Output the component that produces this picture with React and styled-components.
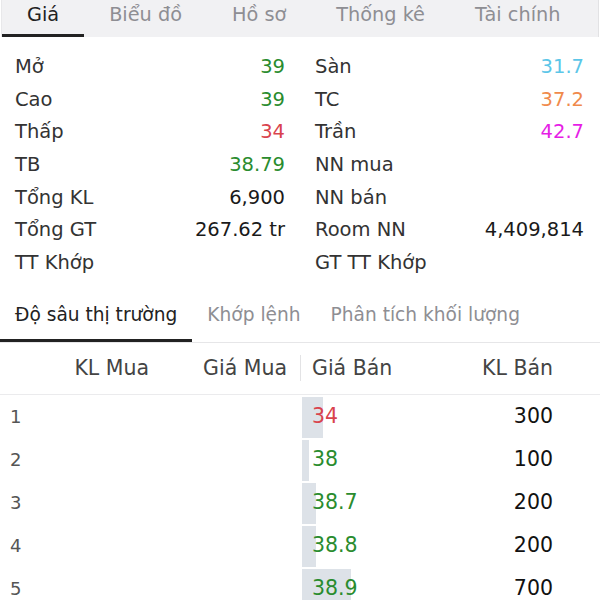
import React from "react";
import styled, { createGlobalStyle } from "styled-components";

const Global = createGlobalStyle`
  html, body { margin: 0; padding: 0; background: #fff; }
  body { font-family: "DejaVu Sans", "Noto Sans", sans-serif; -webkit-font-smoothing: antialiased; }
  * { box-sizing: border-box; }
`;

const Page = styled.div`
  width: 600px;
  height: 600px;
  overflow: hidden;
  background: #fff;
`;

const TopTabs = styled.div`
  display: flex;
  height: 37px;
  background: #f1f1f3;
  border-right: 1px solid #e2e2e4;
  border-left: 1px solid #e8e8ea;
  width: 598px;
  margin-left: 1px;
`;

const TopTab = styled.div`
  flex-shrink: 0;
  padding: 0 25px;
  height: 37px;
  line-height: 29px;
  font-size: 19.3px;
  color: ${(p) => (p.$active ? "#222" : "#8e8e93")};
  border-bottom: 3px solid ${(p) => (p.$active ? "#222" : "transparent")};
  white-space: nowrap;
`;

const Stats = styled.div`
  display: grid;
  grid-template-columns: 300px 300px;
  padding-top: 14px;
`;

const StatCol = styled.div`
  display: flex;
  flex-direction: column;
  padding: ${(p) => (p.$right ? "0 16px 0 15px" : "0 15px 0 15px")};
`;

const StatRow = styled.div`
  display: flex;
  justify-content: space-between;
  height: 32.7px;
  line-height: 32.7px;
  font-size: 19.5px;
`;

const StatLabel = styled.span`
  color: #333;
`;

const StatValue = styled.span`
  color: ${(p) => p.$color || "#1a1a1a"};
`;

const SubTabs = styled.div`
  display: flex;
  margin-top: 11px;
  height: 52px;
  border-bottom: 1px solid #e6e6e8;
`;

const SubTab = styled.div`
  padding: 0 15px;
  white-space: nowrap;
  font-size: 18.6px;
  line-height: 48px;
  color: ${(p) => (p.$active ? "#222" : "#8e8e93")};
  border-bottom: 3px solid ${(p) => (p.$active ? "#222" : "transparent")};
`;

const Grid = styled.div`
  display: grid;
  grid-template-columns: 150px 150px 150px 150px;
`;

const HeadRow = styled(Grid)`
  height: 52px;
  align-items: center;
  border-bottom: 1px solid #ebebed;
  font-size: 20.5px;
  color: #444;
`;

const HeadCell = styled.div`
  text-align: ${(p) => p.$align || "right"};
  padding: ${(p) => p.$pad || "0"};
  ${(p) => (p.$divider ? "border-left: 1px solid #e3e3e5; line-height: 26px;" : "")}
`;

const BookRow = styled(Grid)`
  height: 43px;
  font-size: 20.5px;
`;

const Cell = styled.div`
  display: flex;
  align-items: center;
  justify-content: ${(p) => p.$justify || "flex-end"};
  padding: ${(p) => p.$pad || "0"};
  color: ${(p) => p.$color || "#111"};
  position: relative;
`;

const Index = styled.span`
  color: #555;
  font-size: 18px;
`;

const Bar = styled.div`
  position: absolute;
  left: 2px;
  top: 2px;
  bottom: 0;
  background: #dde2e8;
`;

const PriceText = styled.span`
  position: relative;
`;

const GREEN = "#2a8c2e";
const RED = "#d9434d";

const left = [
  ["Mở", "39", GREEN],
  ["Cao", "39", GREEN],
  ["Thấp", "34", RED],
  ["TB", "38.79", GREEN],
  ["Tổng KL", "6,900"],
  ["Tổng GT", "267.62 tr"],
  ["TT Khớp", ""],
];

const right = [
  ["Sàn", "31.7", "#5cc6e8"],
  ["TC", "37.2", "#f08a4b"],
  ["Trần", "42.7", "#e61ee6"],
  ["NN mua", ""],
  ["NN bán", ""],
  ["Room NN", "4,409,814"],
  ["GT TT Khớp", ""],
];

const book = [
  { price: "34", vol: 300, color: RED },
  { price: "38", vol: 100, color: GREEN },
  { price: "38.7", vol: 200, color: GREEN },
  { price: "38.8", vol: 200, color: GREEN },
  { price: "38.9", vol: 700, color: GREEN },
];

export default function App() {
  return (
    <Page>
      <Global />
      <TopTabs>
        {["Giá", "Biểu đồ", "Hồ sơ", "Thống kê", "Tài chính"].map((t, i) => (
          <TopTab key={t} $active={i === 0}>
            {t}
          </TopTab>
        ))}
      </TopTabs>
      <Stats>
        <StatCol>
          {left.map(([l, v, c]) => (
            <StatRow key={l}>
              <StatLabel>{l}</StatLabel>
              <StatValue $color={c}>{v}</StatValue>
            </StatRow>
          ))}
        </StatCol>
        <StatCol $right>
          {right.map(([l, v, c]) => (
            <StatRow key={l}>
              <StatLabel>{l}</StatLabel>
              <StatValue $color={c}>{v}</StatValue>
            </StatRow>
          ))}
        </StatCol>
      </Stats>
      <SubTabs>
        {["Độ sâu thị trường", "Khớp lệnh", "Phân tích khối lượng"].map((t, i) => (
          <SubTab key={t} $active={i === 0}>
            {t}
          </SubTab>
        ))}
      </SubTabs>
      <HeadRow>
        <HeadCell $pad="0 1px 0 0">KL Mua</HeadCell>
        <HeadCell $pad="0 13px 0 0">Giá Mua</HeadCell>
        <HeadCell $align="left" $pad="0 0 0 11px" $divider>
          Giá Bán
        </HeadCell>
        <HeadCell $pad="0 47px 0 0">KL Bán</HeadCell>
      </HeadRow>
      {book.map((r, i) => (
        <BookRow key={i}>
          <Cell $justify="flex-start" $pad="0 0 0 10px">
            <Index>{i + 1}</Index>
          </Cell>
          <Cell />
          <Cell $justify="flex-start" $pad="0 0 0 12px" $color={r.color}>
            <Bar style={{ width: `${Math.round((r.vol / 700) * 49)}px` }} />
            <PriceText>{r.price}</PriceText>
          </Cell>
          <Cell $pad="0 47px 0 0">{r.vol}</Cell>
        </BookRow>
      ))}
    </Page>
  );
}
